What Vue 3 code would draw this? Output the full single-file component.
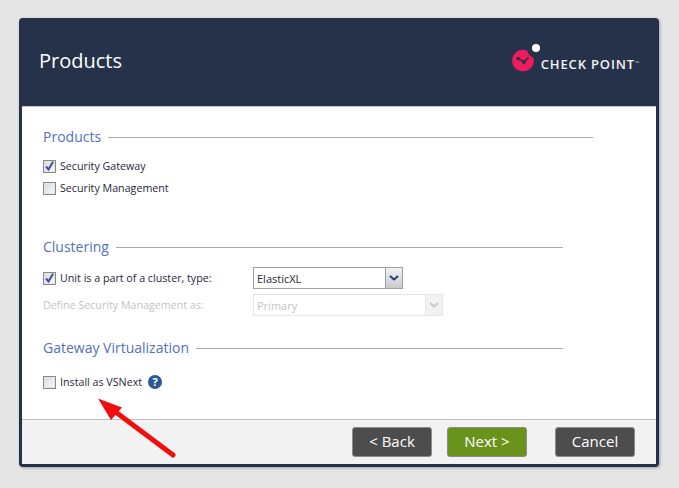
<script setup>
const buttons = [
  { label: '< Back', cls: 'btn-dark' },
  { label: 'Next >', cls: 'btn-next' },
  { label: 'Cancel', cls: 'btn-dark btn-cancel' },
]
</script>

<template>
  <div class="page">
    <div class="wizard">
      <header class="wizard-head">
        <h1 class="wizard-title">Products</h1>
        <div class="logo">
          <svg class="logo-mark" width="29" height="29" viewBox="0 0 29 29" aria-hidden="true">
            <circle cx="11" cy="17.5" r="10.8" fill="#ee1c5c" />
            <circle cx="24" cy="6" r="9" fill="#26324a" />
            <path d="M6 15.500L12 19L16.500 14.500" stroke="#26324a" stroke-width="1.600" fill="none" />
            <circle cx="6" cy="15.500" r="1.700" fill="#26324a" />
            <circle cx="12" cy="19" r="2" fill="#26324a" />
            <circle cx="24" cy="5" r="4" fill="#fff" />
          </svg>
          <span class="logo-text">CHECK POINT</span>
          <span class="logo-tm">™</span>
        </div>
      </header>

      <main class="wizard-body">
        <section class="group group-products">
          <div class="legend legend-wide"><span>Products</span><i></i></div>
          <label class="row row-first">
            <span class="box">
              <svg width="9" height="10" viewBox="0 0 9 10"><path d="M1 5.500l2.500 3L8 .8" stroke="#3c52a0" stroke-width="2" fill="none" /></svg>
            </span>
            Security Gateway
          </label>
          <label class="row">
            <span class="box"></span>
            Security Management
          </label>
        </section>

        <section class="group group-cluster">
          <div class="legend"><span>Clustering</span><i></i></div>
          <div class="field-row field-first">
            <label class="row field-label">
              <span class="box">
                <svg width="9" height="10" viewBox="0 0 9 10"><path d="M1 5.500l2.500 3L8 .8" stroke="#3c52a0" stroke-width="2" fill="none" /></svg>
              </span>
              Unit is a part of a cluster, type:
            </label>
            <div class="select">
              <span class="select-value">ElasticXL</span>
              <span class="select-arrow">
                <svg width="10" height="6" viewBox="0 0 10 6"><path d="M1 1l4 3.500L9 1" stroke="#1f3a7a" stroke-width="2" fill="none" /></svg>
              </span>
            </div>
          </div>
          <div class="field-row field-second">
            <span class="field-label disabled-label">Define Security Management as:</span>
            <div class="select select-off">
              <span class="select-value">Primary</span>
              <span class="select-arrow">
                <svg width="10" height="6" viewBox="0 0 10 6"><path d="M1 1l4 3.500L9 1" stroke="#c8c8c8" stroke-width="2" fill="none" /></svg>
              </span>
            </div>
          </div>
        </section>

        <section class="group group-virtual">
          <div class="legend"><span>Gateway Virtualization</span><i></i></div>
          <label class="row row-vs">
            <span class="box"></span>
            Install as VSNext
            <span class="help">?</span>
          </label>
        </section>
      </main>

      <footer class="wizard-foot">
        <button v-for="b in buttons" :key="b.label" type="button" class="btn" :class="b.cls">{{ b.label }}</button>
      </footer>
    </div>

    <!-- red annotation arrow painted over the screenshot -->
    <svg class="arrow" width="679" height="488" viewBox="0 0 679 488" aria-hidden="true">
      <path d="M173 455L113 410" stroke="#f00e0e" stroke-width="5" stroke-linecap="round" />
      <path d="M98 398.500L122 407.500L111 420z" fill="#f00e0e" />
    </svg>
  </div>
</template>

<style scoped>
.page {
  position: relative;
  width: 679px;
  height: 488px;
  padding: 18px 20px 21px 19px;
  box-sizing: border-box;
  background: #e5e5e5;
  font-family: "Open Sans", sans-serif;
  overflow: hidden;
}

.wizard {
  height: 449px;
  display: flex;
  flex-direction: column;
  box-sizing: border-box;
  background: #26324a;
  border-radius: 4px;
  padding: 0 3px 3px;
  box-shadow: 1px 1px 3px rgba(0, 0, 0, 0.3);
}

.wizard-head {
  height: 88px;
  flex-shrink: 0;
  display: flex;
  align-items: center;
  justify-content: space-between;
  padding: 0 21px 3px 17px;
  box-sizing: border-box;
}

.wizard-title {
  margin: 0;
  color: #fff;
  font-size: 20px;
  font-weight: 400;
  line-height: 28px;
}

.logo {
  display: flex;
  align-items: center;
  position: relative;
}

.logo-mark {
  margin-top: -7px;
}

.logo-text {
  margin-top: 7px;
  color: #f2f2f2;
  font-family: "Open Sans", sans-serif;
  font-size: 13px;
  font-weight: 600;
  letter-spacing: 0.85px;
  line-height: 14px;
}

.logo-tm {
  position: absolute;
  right: -4px;
  top: 10px;
  font-size: 5px;
  color: #ddd;
}

.wizard-body {
  flex: 1;
  background: #fff;
  padding: 0 21px;
  min-height: 0;
  border-top: 1px solid #c4c4c4;
}

.group-products {
  padding-top: 21px;
}

.group-cluster {
  padding-top: 42px;
}

.group-virtual {
  padding-top: 23px;
}

.legend {
  display: flex;
  align-items: center;
  width: 520px;
  height: 18px;
  color: #5271c0;
  font-size: 14px;
  line-height: 18px;
}

.legend-wide {
  width: 550px;
}

.legend span {
  margin-right: 7px;
  white-space: nowrap;
}

.legend i {
  flex: 1;
  height: 1px;
  background: #ababab;
}

.row {
  display: flex;
  align-items: center;
  height: 16px;
  margin-top: 6px;
  color: #1f1f3a;
  font-size: 10.700px;
  white-space: nowrap;
}

.row-first {
  margin-top: 12px;
}

.row-vs {
  margin-top: 17px;
}

.box {
  width: 11px;
  height: 11px;
  margin-right: 4px;
  flex-shrink: 0;
  border: 1px solid #8a8a8a;
  background: linear-gradient(135deg, #d8d9e0, #fbfbfb);
  box-shadow: inset 0 0 0 1px #e4e4e4;
  display: flex;
  align-items: center;
  justify-content: center;
}

.field-row {
  display: flex;
  align-items: center;
}

.field-first {
  margin-top: 11px;
}

.field-second {
  margin-top: 5px;
}

.field-label {
  width: 210px;
  margin-top: 0;
  flex-shrink: 0;
}

.disabled-label {
  color: #c4c4c4;
  font-size: 10.700px;
  white-space: nowrap;
}

.select {
  width: 150px;
  height: 22px;
  box-sizing: border-box;
  display: flex;
  border: 1px solid #a0a0a0;
  background: #fff;
  color: #1f1f3a;
  font-size: 11px;
  line-height: 21px;
}

.select-value {
  flex: 1;
  padding-left: 3px;
}

.select-arrow {
  width: 16px;
  display: flex;
  align-items: center;
  justify-content: center;
  border-left: 1px solid #a0a0a0;
  background: linear-gradient(#f2f2f4, #c9cacf);
}

.select-off {
  width: 190px;
  border-color: #e6e6e6;
  color: #c4c4c4;
}

.select-off .select-arrow {
  border-left-color: #e6e6e6;
  background: #f2f2f2;
}

.help {
  width: 14px;
  height: 14px;
  margin-left: 6px;
  border-radius: 50%;
  background: #2a5a93;
  color: #fff;
  font-size: 11px;
  font-weight: 700;
  line-height: 14px;
  text-align: center;
}

.wizard-foot {
  height: 45px;
  flex-shrink: 0;
  box-sizing: border-box;
  display: flex;
  align-items: center;
  padding: 0 19px 0 330px;
  background: #f2f2f2;
  border-top: 1px solid #bdbdbd;
}

.btn {
  width: 80px;
  height: 30px;
  margin-right: 15px;
  padding: 0 0 2px;
  border: 1px solid #8c8c8c;
  border-radius: 3px;
  color: #fff;
  font-family: "Open Sans", sans-serif;
  font-size: 15px;
  line-height: 26px;
}

.btn-dark {
  background: #4d4d4d;
}

.btn-next {
  background: #6a931c;
}

.btn-cancel {
  margin-right: 0;
  margin-left: 13px;
}

.arrow {
  position: absolute;
  left: 0;
  top: 0;
  pointer-events: none;
}
</style>
